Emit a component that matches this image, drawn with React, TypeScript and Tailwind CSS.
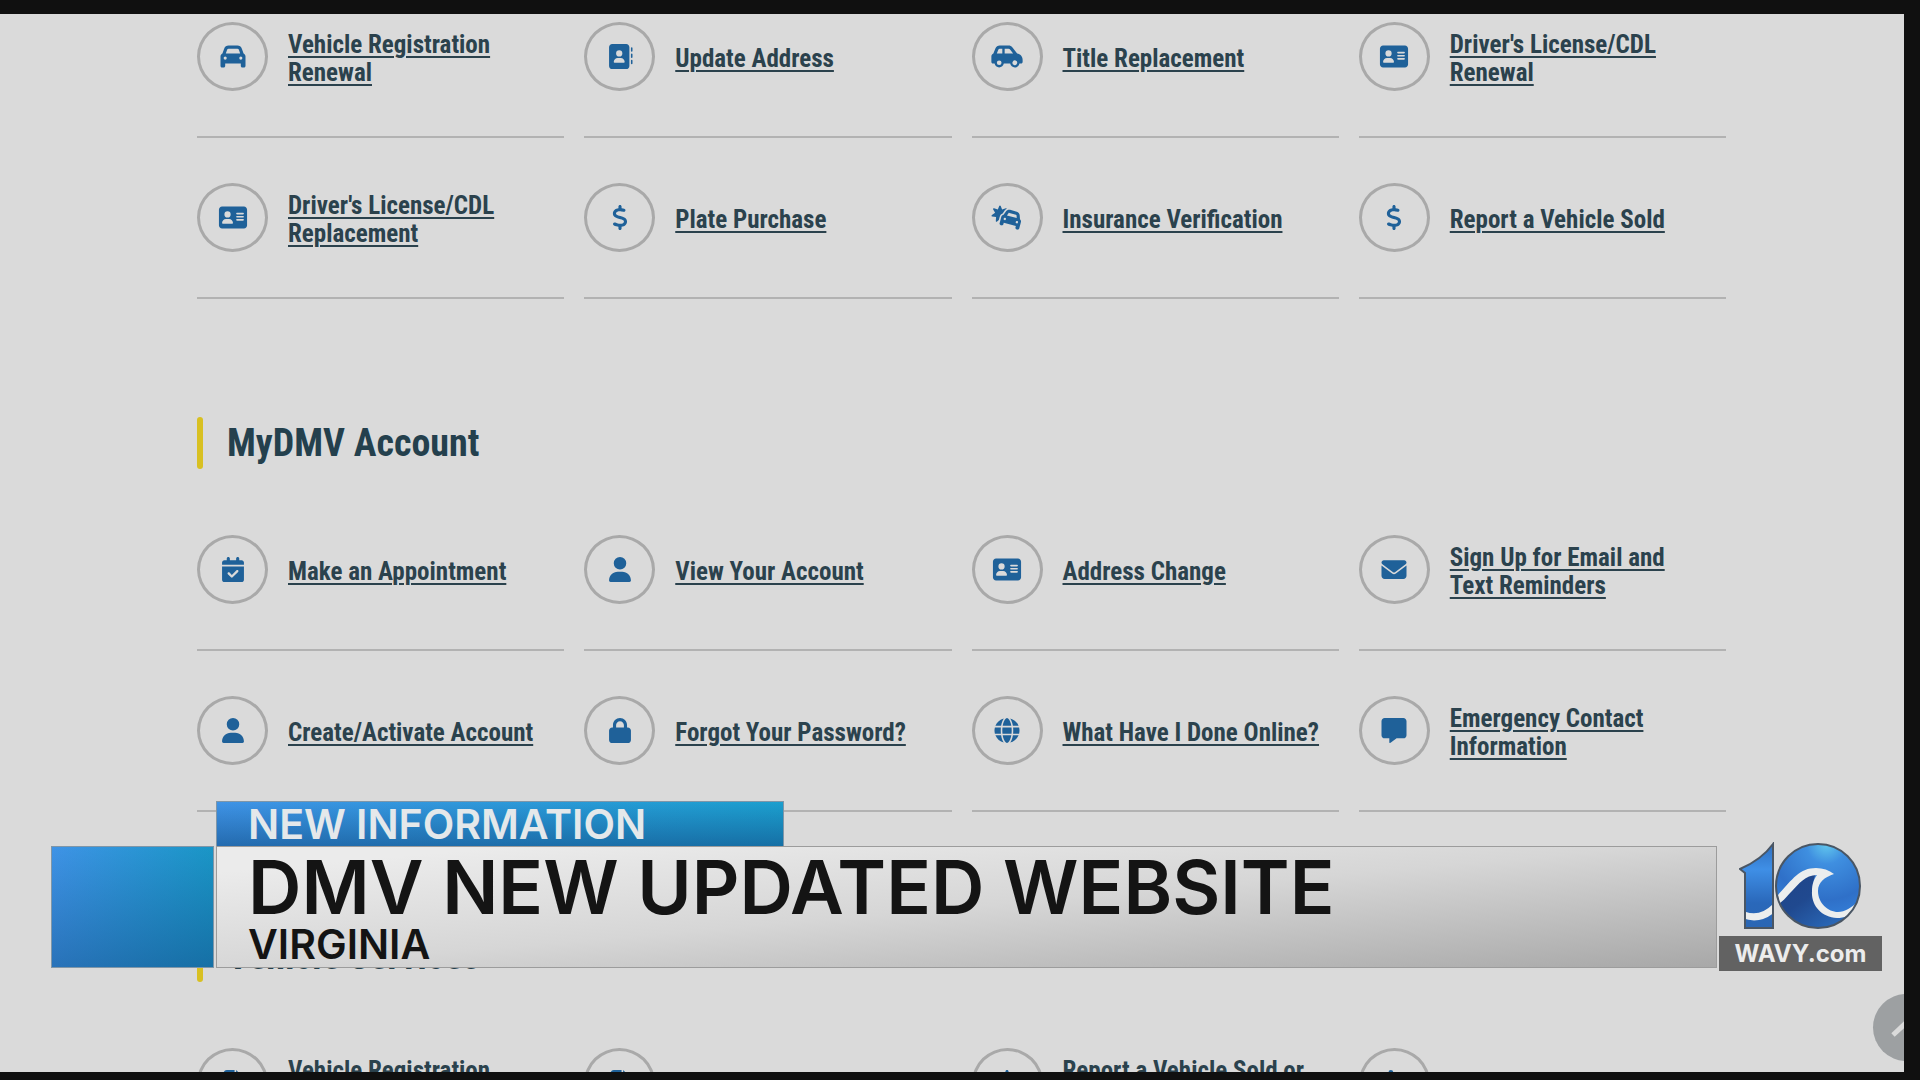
import type { IconType } from 'react-icons';
import {
  FaAddressBook,
  FaAddressCard,
  FaCalendarCheck,
  FaCar,
  FaCarBurst,
  FaCarSide,
  FaDollarSign,
  FaEnvelope,
  FaFileLines,
  FaGlobe,
  FaLock,
  FaMessage,
  FaUser,
  FaWheelchair,
} from 'react-icons/fa6';

interface Service {
  label: string;
  icon: IconType;
}

const POPULAR: Service[] = [
  { label: 'Vehicle Registration Renewal', icon: FaCar },
  { label: 'Update Address', icon: FaAddressBook },
  { label: 'Title Replacement', icon: FaCarSide },
  { label: "Driver's License/CDL Renewal", icon: FaAddressCard },
  { label: "Driver's License/CDL Replacement", icon: FaAddressCard },
  { label: 'Plate Purchase', icon: FaDollarSign },
  { label: 'Insurance Verification', icon: FaCarBurst },
  { label: 'Report a Vehicle Sold', icon: FaDollarSign },
];

const ACCOUNT: Service[] = [
  { label: 'Make an Appointment', icon: FaCalendarCheck },
  { label: 'View Your Account', icon: FaUser },
  { label: 'Address Change', icon: FaAddressCard },
  { label: 'Sign Up for Email and Text Reminders', icon: FaEnvelope },
  { label: 'Create/Activate Account', icon: FaUser },
  { label: 'Forgot Your Password?', icon: FaLock },
  { label: 'What Have I Done Online?', icon: FaGlobe },
  { label: 'Emergency Contact Information', icon: FaMessage },
];

const VEHICLE: Service[] = [
  { label: 'Vehicle Registration Renewal', icon: FaFileLines },
  { label: 'Title Replacement', icon: FaFileLines },
  { label: 'Report a Vehicle Sold or Traded', icon: FaDollarSign },
  { label: 'Disabled Parking', icon: FaWheelchair },
];

function ServiceGrid({ items }: { items: Service[] }) {
  return (
    <ul className="grid grid-cols-4 gap-x-5">
      {items.map(({ label, icon: Icon }, i) => (
        <li key={i} className="flex items-center gap-5 border-b-2 border-[#b2b2b2] py-[45px] pr-4">
          <span className="flex h-[69px] w-[71px] shrink-0 items-center justify-center rounded-[50%] border-3 border-[#a9a9a9] text-[#1f6199]">
            <Icon className="h-[25px] w-8" />
          </span>
          <a
            href="#"
            className="pt-1 text-[25px] leading-7 font-bold text-[#2b424d] underline decoration-2 underline-offset-3"
          >
            {label}
          </a>
        </li>
      ))}
    </ul>
  );
}

function SectionHeading({ children }: { children: string }) {
  return (
    <div className="mt-[118px] mb-[21px] flex h-[52px] items-center gap-6">
      <span className="h-full w-[6px] rounded-sm bg-[#d8c022]" />
      <h2 className="text-[38px] font-bold text-[#24404d]">{children}</h2>
    </div>
  );
}

function StationLogo() {
  return (
    <svg viewBox="0 0 124 88" className="h-[88px] w-[124px]" role="img" aria-label="10">
      <defs>
        <linearGradient id="one" x1="0" y1="0" x2="0" y2="1">
          <stop offset="0" stopColor="#2f6fc0" />
          <stop offset="0.3" stopColor="#3f8fe6" />
          <stop offset="0.7" stopColor="#2a68ba" />
          <stop offset="1" stopColor="#2a66b4" />
        </linearGradient>
        <radialGradient id="sky" cx="0.6" cy="0" r="0.95">
          <stop offset="0" stopColor="#62c8ee" />
          <stop offset="0.25" stopColor="#3f8fe0" />
          <stop offset="0.7" stopColor="#2f70c8" />
          <stop offset="1" stopColor="#3482dc" />
        </radialGradient>
        <linearGradient id="sea" x1="0" y1="0" x2="1" y2="1">
          <stop offset="0" stopColor="#1f4488" />
          <stop offset="0.4" stopColor="#20498f" />
          <stop offset="1" stopColor="#2f78cc" />
        </linearGradient>
        <clipPath id="disc">
          <circle cx="79" cy="44" r="42" />
        </clipPath>
        <clipPath id="digit">
          <path d="M34 2 C26 13 15 21 1 27 L6 31 V86 H34 Z" />
        </clipPath>
      </defs>
      <path d="M34 2 C26 13 15 21 1 27 L6 31 V86 H34 Z" fill="url(#one)" />
      <g clipPath="url(#digit)">
        <path d="M5 73 C16 77 26 75 36 65" fill="none" stroke="#eceeee" strokeWidth="7" />
      </g>
      <path d="M34 2 C26 13 15 21 1 27 L6 31 V86 H34 Z" fill="none" stroke="#4a5664" strokeWidth="2" />
      <circle cx="79" cy="44" r="42" fill="url(#sky)" />
      <g clipPath="url(#disc)">
        <path
          d="M36 60 C52 44 60 31 77 31 C72 42 73 60 82 68 C92 77 106 75 120 64 V90 H36 Z"
          fill="url(#sea)"
        />
        <path
          d="M37 55 C53 38 60 26 77 26 C84 26 90 28 95 32 C86 35 79 40 79 49 C79 61 89 70 99 70 C106 70 112 66 121 58 L119 66 C112 74 105 76 98 76 C82 75 72 63 73 49 C73 42 75 37 78 33 C66 33 60 42 53 49 C48 54 45 59 38 63 Z"
          fill="#eceeee"
        />
      </g>
      <circle cx="79" cy="44" r="42" fill="none" stroke="#4a5664" strokeWidth="2" />
    </svg>
  );
}

function LowerThird() {
  return (
    <div className="absolute top-[801px] right-[38px] left-[51px] flex items-end font-['Inter','Open_Sans',sans-serif] font-semibold">
      <div className="mr-[2px] mb-[3px] h-[122px] w-[163px] shrink-0 border border-[#7f96a8] bg-[linear-gradient(170deg,transparent,#12508a99),linear-gradient(to_right,#3f93e6,#1b9fce)]" />
      <div className="mb-[3px] flex-1">
        <div className="flex h-[45px] w-[568px] items-center border border-b-0 border-[#7f96a8] bg-[linear-gradient(to_bottom,transparent,#12508a99),linear-gradient(to_right,#3f93e6,#1b9fce)] pl-[31px] text-[41px] leading-none text-[#e4e8ea]">
          NEW INFORMATION
        </div>
        <div className="flex h-[122px] flex-col border border-[#9c9c9c] bg-[linear-gradient(175deg,#ebebeb_10%,#d6d6d6_50%,#a8a8a8_100%)] pl-[31px] text-[#141414]">
          <div className="mt-[5px] text-[74px] leading-[70px] whitespace-nowrap">DMV NEW UPDATED WEBSITE</div>
          <div className="text-[41px] leading-[44px]">VIRGINIA</div>
        </div>
      </div>
      <div className="ml-[2px] flex w-[163px] shrink-0 flex-col items-center">
        <StationLogo />
        <div className="mt-1.5 flex h-[35px] w-full items-center justify-center bg-[#626262] text-2xl font-bold text-[#ececec]">
          WAVY.com
        </div>
      </div>
    </div>
  );
}

export default function App() {
  return (
    <div className="relative h-screen overflow-hidden bg-[#101010] pt-[14px] pr-4 pb-2 font-['Roboto_Condensed','Liberation_Sans_Narrow','Roboto',sans-serif]">
      <main className="relative h-full overflow-hidden bg-[#dadada] pr-[178px] pl-[197px]">
        <div className="-mt-[37px]">
          <ServiceGrid items={POPULAR} />
          <SectionHeading>MyDMV Account</SectionHeading>
          <ServiceGrid items={ACCOUNT} />
          <SectionHeading>Vehicle Services</SectionHeading>
          <ServiceGrid items={VEHICLE} />
        </div>
        <button
          aria-label="Back to top"
          className="absolute -right-9 bottom-[11px] flex h-[67px] w-[67px] items-center justify-center rounded-full bg-[#9da0a2]"
        >
          <svg viewBox="0 0 32 20" className="h-5 w-8" fill="none" stroke="#dadada" strokeWidth="5">
            <path d="M2 17 L16 4 L30 17" />
          </svg>
        </button>
      </main>
      <LowerThird />
    </div>
  );
}
